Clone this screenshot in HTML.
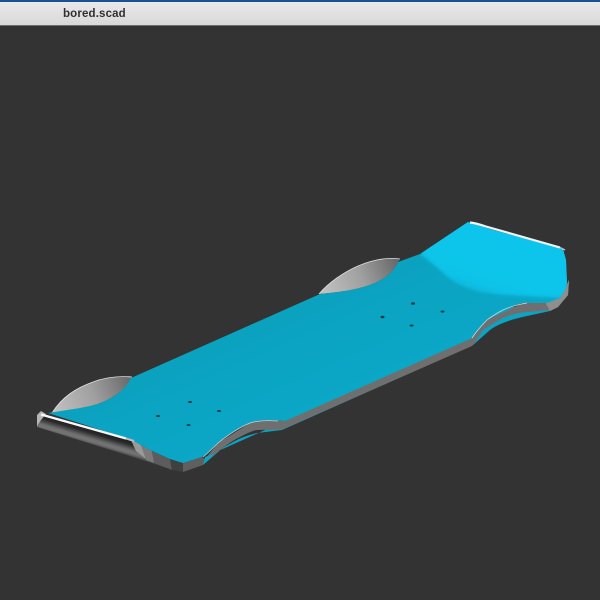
<!DOCTYPE html>
<html>
<head>
<meta charset="utf-8">
<style>
html,body{margin:0;padding:0;width:600px;height:600px;overflow:hidden;background:#333;}
#bar{position:absolute;left:0;top:0;width:600px;height:26px;box-sizing:border-box;background:linear-gradient(#e9e9e9,#d9d9d9);border-top:2px solid #1b4f96;border-bottom:1px solid #6e6e6e;}
#t{position:absolute;left:63px;top:5px;font:bold 11.5px/14px "Liberation Sans",sans-serif;color:#303030;letter-spacing:.15px;}
svg{position:absolute;left:0;top:0;}
</style>
</head>
<body>
<svg width="600" height="600" viewBox="0 0 600 600" xmlns="http://www.w3.org/2000/svg">
<defs>
<linearGradient id="lens1" gradientUnits="userSpaceOnUse" x1="55" y1="410" x2="132" y2="380">
<stop offset="0" stop-color="#c0c0c0"/><stop offset=".5" stop-color="#a0a0a0"/><stop offset="1" stop-color="#686868"/>
</linearGradient>
<linearGradient id="lens2" gradientUnits="userSpaceOnUse" x1="325" y1="292" x2="398" y2="262">
<stop offset="0" stop-color="#c0c0c0"/><stop offset=".5" stop-color="#a0a0a0"/><stop offset="1" stop-color="#686868"/>
</linearGradient>
<linearGradient id="band" gradientUnits="userSpaceOnUse" x1="93" y1="428" x2="88" y2="445">
<stop offset="0" stop-color="#181818"/><stop offset=".3" stop-color="#2a2a2a"/><stop offset=".62" stop-color="#707070"/><stop offset=".76" stop-color="#747474"/><stop offset="1" stop-color="#393939"/>
</linearGradient>
<linearGradient id="nose" gradientUnits="userSpaceOnUse" x1="510" y1="238" x2="490" y2="296">
<stop offset="0" stop-color="#0cc5ec"/><stop offset=".85" stop-color="#0cc3e8"/><stop offset="1" stop-color="#0bb8dc"/>
</linearGradient>
<linearGradient id="main" gradientUnits="userSpaceOnUse" x1="250" y1="330" x2="290" y2="420">
<stop offset="0" stop-color="#0ba2c0"/><stop offset="1" stop-color="#0ba7c7"/>
</linearGradient>
<filter id="soft" x="-5%" y="-5%" width="110%" height="110%"><feGaussianBlur stdDeviation="1.6"/></filter>
<clipPath id="surf"><path d="M420 254L468 222L490 229L563 249L566 260L567 283L565 290L560 298L547 303L523 303C515 305 509 307 503 310C497 313 491 317 487 320C481 326 476 332 472 338L400 300Z"/></clipPath>
</defs>

<!-- far lens cut-outs -->
<path d="M52 413C62 397 76 388 93 382C106 377 120 376 132 377L131 379C126 389 116 396 103 402C88 408 70 410 52 413Z" fill="url(#lens1)"/>
<path d="M52 413C62 397 76 388 93 382C106 377 120 376 132 377" fill="none" stroke="#e2e2e2" stroke-width=".8"/>
<path d="M319 294C328 283 344 272 358 266C372 260 386 257 400 259L398 262C394 271 386 278 377 282C360 290 340 292 319 294Z" fill="url(#lens2)"/>
<path d="M319 294C328 283 344 272 358 266C372 260 386 257 400 259" fill="none" stroke="#dcdcdc" stroke-width=".8"/>

<!-- front kicked underside band -->
<path d="M37 415L37 427L130 456L172 470L150 452L132 439L42 414Z" fill="url(#band)"/>
<path d="M130 438L141 445L146 459L136 451Z" fill="#9a9a9a"/>
<path d="M141 445L152 451L154 463L146 460Z" fill="#7a7a7a"/>
<path d="M152 451L170 459L172 470L154 463Z" fill="#5c5c5c"/>
<path d="M170 459L183 463L183 472L172 470Z" fill="#3f3f3f"/>
<path d="M183 463L202 457L206 460L203 465L183 472Z" fill="#5f5f5f"/>
<path d="M37 415L41 411L46 414L41 420L37 426Z" fill="#b5b5b5"/>

<!-- near edge: silhouette filled cyan underside, then gray rim -->
<path d="M203 465L218 452C224 447 228 445 233 442C240 438 248 435 257 433L282 430L473 345L490 330C494 327 498 325 503 323C510 320 518 318 527 316L550 311L558 307L568 295L569 280L560 298L547 303L400 320L285 421L205 457Z" fill="#0ba4c2"/>
<path d="M205 459C207 457 210 454 213 455C217 452 222 449 227 445C232 441 236 439 240 437C246 434 251 431 257 430L282 429.500L472 346C476 342 479 335 483 330C489 326 496 322 503 318C510 315 518 313 527 312L550 310L558 307L568 295L569 280L565 290L560 298L547 303L523 303L487 320L472 338L285 421L270 420C262 420 256 421 250 423L218 443Z" fill="#6f6f6f"/>
<path d="M545 302L560 298L565 290L569 280L568 295L558 307L550 311Z" fill="#8e8e8e"/>

<!-- top surface -->
<path d="M48 413L80 408C90 406 96 405 103 402C116 396 126 389 131 378L320 294C340 292 360 290 377 282C386 278 394 271 398 262L420 254L468 222L490 229L563 249L566 260L567 283L565 290L560 298L547 303L523 303C515 305 509 307 503 310C497 313 491 317 487 320C481 326 476 332 472 338L285 421L270 420C262 420 256 421 250 423C238 428 228 435 218 443C212 449 207 454 202 457L183 463L170 459L150 450L132 440Z" fill="url(#main)"/>
<!-- nose -->
<g clip-path="url(#surf)">
<path d="M420 254L455 215L600 240L590 296L560 298L527 296C510 295 498 295 487 293C475 291 467 288 460 285C452 281 446 276 440 270C433 264 427 259 420 254Z" fill="url(#nose)" filter="url(#soft)"/>
</g>

<!-- white rims -->
<path d="M470 222.500C474 223 480 224.500 486 226.500L560 247.500" fill="none" stroke="#f2f2f2" stroke-width="2.200"/>
<path d="M560 247.500L565 250" fill="none" stroke="#bcbcbc" stroke-width="1.500"/>
<path d="M41 414.500L126 438.500" fill="none" stroke="#f7f7f7" stroke-width="2.400"/>
<path d="M126 438.500L134 441" fill="none" stroke="#bdbdbd" stroke-width="2"/>
<path d="M472 338C476 332 481 326 487 320C491 317 497 313 503 310C509 307 515 305 527 303" fill="none" stroke="#d8d8d8" stroke-width=".7"/>
<path d="M203 457C208 453 213 448 218 443C228 435 238 428 250 423C256 421 265 420 278 421" fill="none" stroke="#c8d2d4" stroke-width=".7"/>

<!-- bolt holes -->
<g fill="#0b3b46">
<ellipse cx="158" cy="416" rx="2" ry="1"/><ellipse cx="190" cy="402" rx="2" ry="1"/><ellipse cx="219" cy="411" rx="2" ry="1"/><ellipse cx="188.500" cy="425" rx="2" ry="1"/>
<ellipse cx="382.500" cy="317" rx="2" ry="1.300"/><ellipse cx="413" cy="303.500" rx="2" ry="1.300"/><ellipse cx="442.500" cy="311.500" rx="2" ry="1"/><ellipse cx="411.500" cy="325.500" rx="2" ry="1"/>
</g>
</svg>
<div id="bar"><div id="t">bored.scad</div></div>
</body>
</html>
